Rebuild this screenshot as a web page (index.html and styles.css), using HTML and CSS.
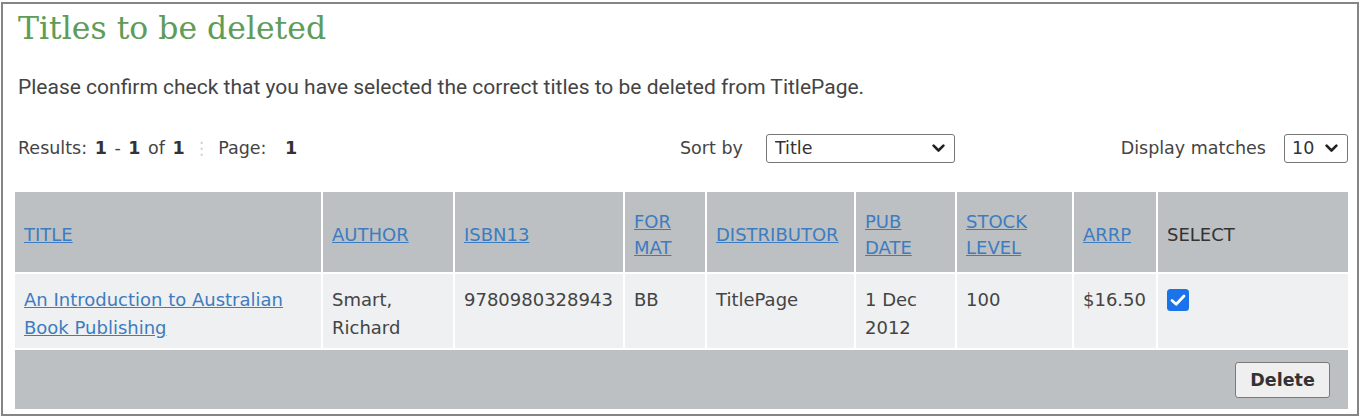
FILE: index.html
```html
<!DOCTYPE html>
<html lang="en">
<head>
<meta charset="utf-8">
<title>Titles to be deleted</title>
<link rel="stylesheet" href="styles.css">
</head>
<body>
<div class="page">
  <h1 class="heading">Titles to be deleted</h1>
  <p class="intro">Please confirm check that you have selected the correct titles to be deleted from TitlePage.</p>
  <div class="toolbar">
    <div class="results">Results: <b>1</b> - <b>1</b> of <b>1</b><span class="sep">&#8942;</span>Page: <b class="pg">1</b></div>
    <div class="sort">
      <label class="lbl" for="sortby">Sort by</label>
      <select id="sortby" class="sel sel-sort"><option>Title</option></select>
    </div>
    <div class="display">
      <label class="lbl" for="matches">Display matches</label>
      <select id="matches" class="sel sel-num"><option>10</option></select>
    </div>
  </div>
  <table class="grid">
    <colgroup>
      <col class="c-title"><col class="c-author"><col class="c-isbn"><col class="c-format"><col class="c-dist"><col class="c-pub"><col class="c-stock"><col class="c-arrp"><col class="c-select">
    </colgroup>
    <thead>
      <tr>
        <th><a href="#">TITLE</a></th>
        <th><a href="#">AUTHOR</a></th>
        <th><a href="#">ISBN13</a></th>
        <th><a href="#">FOR<br>MAT</a></th>
        <th><a href="#">DISTRIBUTOR</a></th>
        <th><a href="#">PUB<br>DATE</a></th>
        <th><a href="#">STOCK<br>LEVEL</a></th>
        <th><a href="#">ARRP</a></th>
        <th class="plain">SELECT</th>
      </tr>
    </thead>
    <tbody>
      <tr>
        <td><a href="#">An Introduction to Australian Book Publishing</a></td>
        <td>Smart,<br>Richard</td>
        <td>9780980328943</td>
        <td>BB</td>
        <td>TitlePage</td>
        <td>1 Dec<br>2012</td>
        <td>100</td>
        <td class="price">$16.50</td>
        <td><span class="check"><svg viewBox="0 0 22 22" width="22" height="22"><rect x="0" y="0" width="22" height="22" rx="3.5" fill="#1a73e8"/><path d="M5 11.5 L9.2 15.3 L17 7" fill="none" stroke="#fff" stroke-width="2.8" stroke-linecap="round" stroke-linejoin="round"/></svg></span></td>
      </tr>
    </tbody>
    <tfoot>
      <tr>
        <td colspan="9" class="foot"><button class="btn" type="button">Delete</button></td>
      </tr>
    </tfoot>
  </table>
</div>
</body>
</html>
```

FILE: styles.css
```css
html, body {
  margin: 0;
  padding: 0;
  background: #fff;
}
body {
  font-family: "DejaVu Sans", Verdana, sans-serif;
  color: #444;
}
.page {
  margin: 2px 4px 0 1px;
  border: 2px solid #858585;
  padding: 0 9px 5px 12px;
  height: 414px;
  box-sizing: border-box;
}
.heading {
  margin: 0;
  padding: 2px 0 0 3px;
  font-family: "DejaVu Serif", Georgia, serif;
  font-weight: normal;
  font-size: 31.5px;
  line-height: 44px;
  color: #5e9c58;
}
.intro {
  margin: 25px 0 0 3px;
  font-family: Roboto, "Noto Sans", sans-serif;
  font-size: 21px;
  line-height: 24px;
  color: #444;
}
.toolbar {
  display: grid;
  grid-template-columns: 665px 1fr auto;
  align-items: center;
  margin-top: 34px;
  height: 30px;
  font-size: 17.5px;
}
.results {
  padding-left: 3px;
}
.results b {
  color: #333;
  margin: 0 2px;
}
.sep {
  color: #d0d0d0;
  margin: 0 8px 0 6px;
}
.results .pg {
  margin-left: 13px;
}
.sort, .display {
  display: flex;
  align-items: center;
}
.lbl {
  margin-right: 18px;
}
.sort .lbl {
  margin-right: 23px;
}
.sel {
  appearance: none;
  -webkit-appearance: none;
  height: 29px;
  border: 1px solid #767676;
  border-radius: 3px;
  background-color: #fff;
  background-image: url("data:image/svg+xml,%3Csvg xmlns='http://www.w3.org/2000/svg' width='13' height='9' viewBox='0 0 13 9'%3E%3Cpath d='M1.6 1.6 L6.5 6.5 L11.4 1.6' fill='none' stroke='%23222' stroke-width='2.6' stroke-linecap='round' stroke-linejoin='round'/%3E%3C/svg%3E");
  background-repeat: no-repeat;
  background-position: right 9px center;
  font-family: "DejaVu Sans", Verdana, sans-serif;
  font-size: 17.5px;
  color: #333;
  padding: 0 0 0 8px;
}
.sel-sort {
  width: 189px;
}
.sel-num {
  width: 64px;
  padding-left: 7px;
}
.grid {
  margin-top: 29px;
  width: 1333px;
  border-collapse: collapse;
  table-layout: fixed;
  font-size: 18px;
}
.c-title { width: 307px; }
.c-author { width: 132px; }
.c-isbn { width: 170px; }
.c-format { width: 82px; }
.c-dist { width: 149px; }
.c-pub { width: 101px; }
.c-stock { width: 117px; }
.c-arrp { width: 84px; }
.c-select { width: 191px; }
.grid th, .grid td {
  border: 2px solid #fff;
  padding: 0 6px 0 9px;
}
.grid tr > :first-child { border-left: 0; }
.grid tr > :last-child { border-right: 0; }
.grid thead th {
  border-top: 0;
  background: #bcc0c3;
  height: 75px;
  text-align: left;
  font-weight: normal;
  vertical-align: middle;
  line-height: 26px;
  padding-top: 5px;
}
.grid a {
  color: #3d7cc0;
  text-decoration: underline;
}
.grid .plain {
  color: #333;
}
.grid tbody td {
  background: #eef0f1;
  vertical-align: top;
  line-height: 28px;
  padding-top: 12px;
  padding-bottom: 6px;
  color: #444;
}
.grid tbody td.price {
  padding-right: 2px;
}
.check {
  display: inline-block;
  vertical-align: middle;
  line-height: 0;
  margin-top: -3px;
}
.grid tfoot td.foot {
  background: #bcc0c3;
  border-bottom: 0;
  height: 59px;
  text-align: right;
  padding: 0 18px 0 0;
  vertical-align: middle;
}
.btn {
  width: 95px;
  height: 36px;
  border: 1px solid #7a7a7a;
  border-radius: 3px;
  background: #efefef;
  font-family: "DejaVu Sans", Verdana, sans-serif;
  font-weight: bold;
  font-size: 17.5px;
  color: #333;
  padding: 0;
}
```
